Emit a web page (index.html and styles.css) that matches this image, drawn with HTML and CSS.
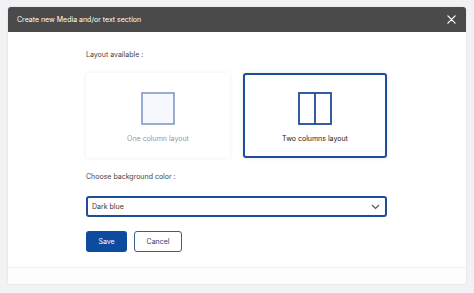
FILE: index.html
```html
<!DOCTYPE html>
<html lang="en">
<head>
  <meta charset="UTF-8" />
  <title>Create new Media and/or text section</title>
  <link rel="stylesheet" href="styles.css">
</head>
<body>
  <div class="modal">
    <header class="modal-header">
      <span class="modal-title">Create new Media and/or text section</span>
      <button class="close" aria-label="Close">
        <svg width="9" height="9" viewBox="0 0 10 10"><path d="M1 1L9 9M9 1L1 9" stroke="#fff" stroke-width="1.4" stroke-linecap="round"/></svg>
      </button>
    </header>

    <div class="modal-body">
      <div class="label">Layout available :</div>
      <div class="layouts">
        <div class="layout">
          <svg width="34" height="33" viewBox="0 0 34 33"><rect x="1" y="1" width="32" height="31" fill="#f6f8fd" stroke="#7892c2" stroke-width="1.5"/></svg>
          <span>One column layout</span>
        </div>
        <div class="layout selected">
          <svg width="34" height="33" viewBox="0 0 34 33"><rect x="1" y="1" width="32" height="31" fill="#fff" stroke="#1d4e98" stroke-width="1.8"/><path d="M17 1V32" stroke="#1d4e98" stroke-width="1.8"/></svg>
          <span>Two columns layout</span>
        </div>
      </div>

      <div class="label color-label">Choose background color :</div>
      <div class="select">
        <span>Dark blue</span>
        <svg width="9" height="6" viewBox="0 0 9 6"><path d="M1 1L4.5 4.5L8 1" fill="none" stroke="#555" stroke-width="1.1"/></svg>
      </div>

      <div class="actions">
        <button class="btn btn-primary">Save</button>
        <button class="btn btn-outline">Cancel</button>
      </div>
    </div>

    <div class="modal-footer"></div>
  </div>
</body>
</html>
```

FILE: styles.css
```css
body {
  margin: 0;
  padding: 7px 8px;
  background: #f2f2f5;
  font-family: 'Inter', 'Noto Sans', sans-serif;
  font-size: 7px;
  color: #333;
}

.modal {
  width: 458px;
  height: 277px;
  background: #fff;
  border-radius: 3px;
  box-shadow: 0 0 2px rgba(0, 0, 0, 0.12);
  display: flex;
  flex-direction: column;
  overflow: hidden;
}

.modal-header {
  height: 25px;
  background: #4a4a4a;
  color: #fff;
  display: flex;
  align-items: center;
  justify-content: space-between;
  padding: 0 10px 0 9px;
  flex-shrink: 0;
}

.modal-title {
  font-size: 7px;
}

.close {
  background: none;
  border: none;
  padding: 0;
  display: flex;
}

.modal-body {
  flex: 1;
  padding: 18px 0 0 78px;
}

.label {
  color: #444;
  line-height: 10px;
}

.layouts {
  display: flex;
  gap: 13px;
  margin-top: 13px;
}

.layout {
  width: 144px;
  height: 85px;
  box-sizing: border-box;
  border-radius: 3px;
  box-shadow: 0 0 4px rgba(0, 0, 0, 0.07);
  display: flex;
  flex-direction: column;
  align-items: center;
  padding-top: 19px;
  color: #999;
}

.layout span {
  margin-top: 9px;
}

.layout.selected {
  border: 2px solid #1d4e98;
  padding-top: 17px;
  color: #222;
  box-shadow: 0 0 4px rgba(0, 0, 0, 0.1);
}

.color-label {
  margin-top: 14px;
}

.select {
  width: 301px;
  height: 21px;
  box-sizing: border-box;
  border: 2px solid #1d4e98;
  border-radius: 3px;
  margin-top: 14px;
  display: flex;
  align-items: center;
  justify-content: space-between;
  padding: 0 5px 0 4px;
  color: #333;
}

.actions {
  display: flex;
  gap: 7px;
  margin-top: 14px;
}

.btn {
  height: 21px;
  border-radius: 3px;
  font-family: inherit;
  font-size: 7px;
  padding: 0;
}

.btn-primary {
  width: 41px;
  background: #0d4b9e;
  border: none;
  color: #fff;
}

.btn-outline {
  width: 48px;
  background: #fff;
  border: 1px solid #3c5c8c;
  color: #1d3e70;
}

.modal-footer {
  height: 16px;
  border-top: 1px solid #f0f0f2;
  background: #fdfdfd;
}
```
